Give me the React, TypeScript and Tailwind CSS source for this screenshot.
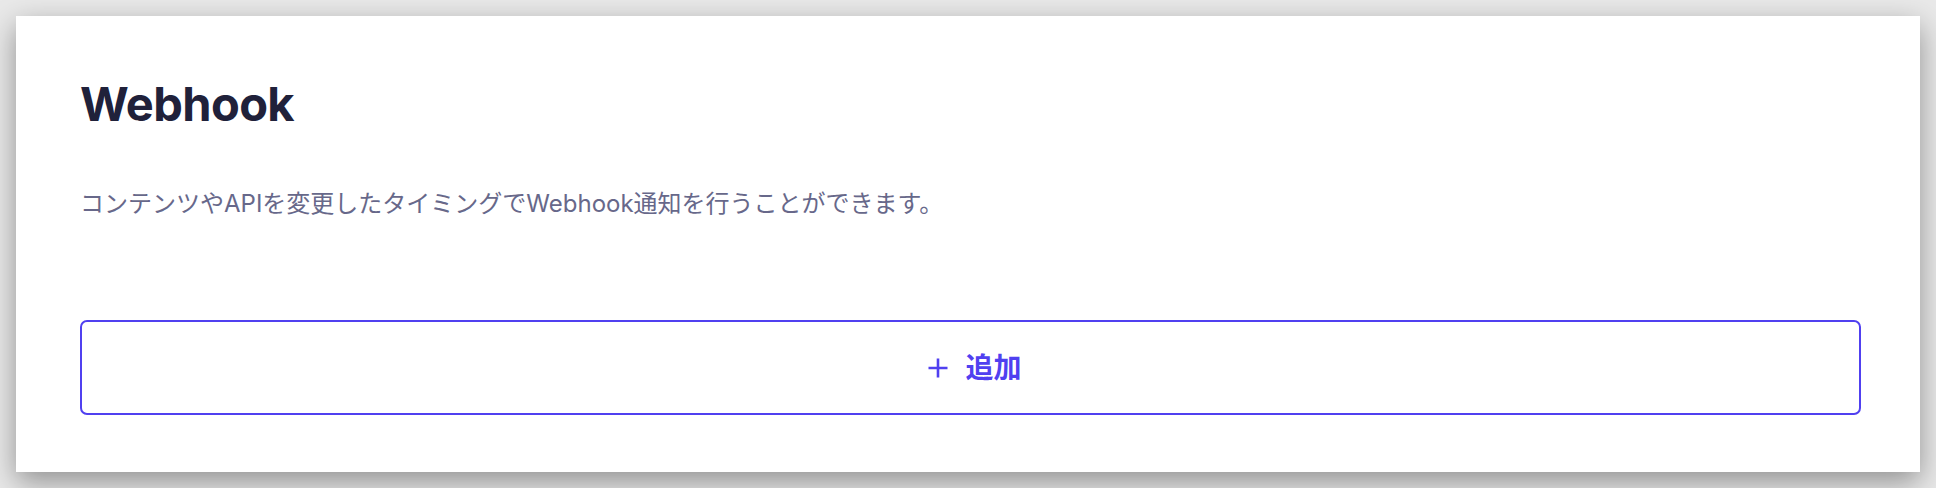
import React from "react";

export default function App() {
  return (
    <div className="w-[1936px] h-[488px] bg-[#e9e9e9] p-4" style={{ fontFamily: 'Inter, "Noto Sans CJK JP", sans-serif' }}>
      <div className="h-[456px] bg-white shadow-[0_10px_28px_rgba(0,0,0,0.38)] pl-16 pr-[59px] pt-[60px]">
        <h1 className="text-[47px] leading-[55px] font-bold text-[#20213a] tracking-[-0.6px]">Webhook</h1>
        <p className="mt-[56px] text-[24px] leading-[34px] text-[#67688a]">
          コンテンツやAPIを変更したタイミングでWebhook通知を行うことができます。
        </p>
        <button className="mt-[99px] w-full h-[95px] rounded-[7px] border-2 border-[#5040f0] bg-white flex items-center justify-center gap-[16px] pl-[8px] text-[#5040f0]">
          <svg width="22" height="22" viewBox="0 0 22 22" fill="none" stroke="currentColor" strokeWidth="2.6">
            <path d="M11 1.5v19M1.5 11h19" />
          </svg>
          <span className="text-[28px] font-bold leading-none">追加</span>
        </button>
      </div>
    </div>
  );
}
